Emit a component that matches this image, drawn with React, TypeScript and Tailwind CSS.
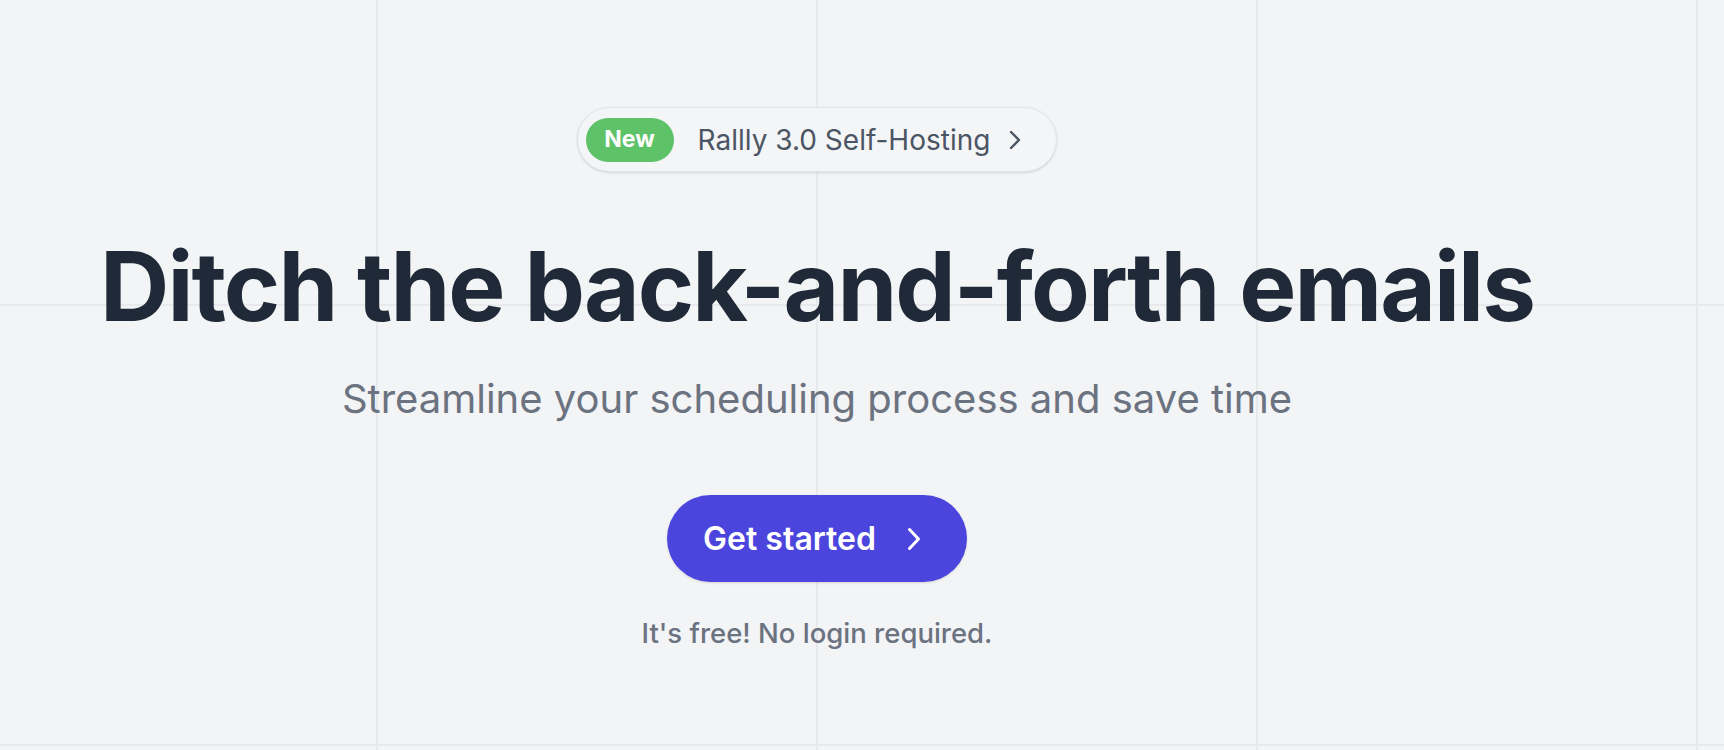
export default function App() {
  return (
    <div className="min-h-screen w-full bg-[#f3f4f6] bg-[linear-gradient(to_right,#e8e9ec_2px,transparent_2px),linear-gradient(to_bottom,#e8e9ec_2px,transparent_2px)] bg-[size:440px_440px] bg-[position:376px_304px] font-['Inter','Noto_Sans',sans-serif]">
      <div className="flex flex-col items-center pr-[90px] pt-[107px]">
        {/* announcement badge */}
        <a
          href="#"
          className="flex h-[65px] items-center rounded-full border border-[#e2e4e8] bg-[#f4f5f7] pl-[8px] pr-[35px] shadow-sm"
        >
          <span className="flex h-[44px] w-[88px] items-center justify-center rounded-full bg-[#5ec269] text-[23px] font-bold leading-none text-white">
            New
          </span>
          <span className="ml-[24px] text-[28px] leading-none text-[#4b5563]">Rallly 3.0 Self-Hosting</span>
          <svg className="ml-[19px]" width="12" height="20" viewBox="0 0 12 20" fill="none" stroke="#4b5563" strokeWidth={2.4} strokeLinecap="round" strokeLinejoin="round">
            <path d="M2 2l8 8-8 8" />
          </svg>
        </a>

        <h1 className="mt-[66px] text-[96px] font-bold leading-none tracking-[-0.02em] text-[#1f2937]">
          Ditch the back-and-forth emails
        </h1>
        <p className="mt-[45px] text-[40px] leading-none text-[#6b7280]">
          Streamline your scheduling process and save time
        </p>

        <a
          href="#"
          className="mt-[76px] flex h-[87px] items-center rounded-full bg-[#4c45dd] pl-[36px] pr-[46px] text-[32px] font-semibold leading-none text-white shadow-sm"
        >
          Get started
          <svg className="ml-[31px]" width="14" height="24" viewBox="0 0 14 24" fill="none" stroke="white" strokeWidth={3} strokeLinecap="round" strokeLinejoin="round">
            <path d="M2.5 2.5l9 9.5-9 9.5" />
          </svg>
        </a>

        <p className="mt-[38px] text-[27.5px] font-medium leading-none text-[#6b7280]">It's free! No login required.</p>
      </div>
    </div>
  );
}
